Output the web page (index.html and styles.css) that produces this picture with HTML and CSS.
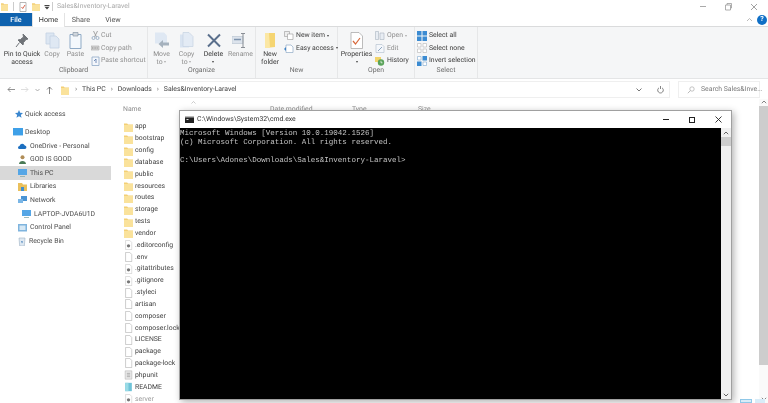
FILE: index.html
```html
<!DOCTYPE html>
<html lang="en">
<head>
<meta charset="utf-8">
<title>Sales&amp;Inventory-Laravel</title>
<link rel="stylesheet" href="styles.css">
</head>
<body>
<svg class="defs" width="0" height="0">
  <symbol id="folder" viewBox="0 0 10 10"><path d="M0 1.5h3.5l1 1H10V10H0z" fill="#f3cf75"/><path d="M0 3h10v7H0z" fill="#fae29b"/></symbol>
  <symbol id="doc" viewBox="0 0 10 12"><path d="M1.5.5h5l2.5 2.5v8.500H1.500z" fill="#fff" stroke="#a9a9a9" stroke-width=".7"/></symbol>
  <symbol id="cfg" viewBox="0 0 10 12"><path d="M1.500.5h5l2.500 2.500v8.500H1.500z" fill="#fff" stroke="#c4c4c4" stroke-width=".7"/><circle cx="5" cy="7" r="2" fill="#777"/></symbol>
</svg>

<header class="titlebar">
  <svg class="qa" width="7" height="9" viewBox="0 0 10 10" preserveAspectRatio="none"><use href="#folder"/></svg>
  <span class="qa-sep"></span>
  <svg class="qa" width="8" height="10" viewBox="0 0 8 10"><path d="M1 .5h6v9H1z" fill="#fff" stroke="#999" stroke-width=".7"/><path d="M2.500 5l1.200 1.500L6 3" fill="none" stroke="#d4553a" stroke-width=".9"/></svg>
  <svg class="qa qa-f" width="8" height="9" viewBox="0 0 10 10" preserveAspectRatio="none"><use href="#folder"/></svg>
  <svg class="qa qa-d" width="6" height="6" viewBox="0 0 6 6"><path d="M.5 1h5v1h-5zM.5 2.700h5L3 5.500z" fill="#444"/></svg>
  <span class="qa-sep qa-sep2"></span>
  <span class="title-text">Sales&amp;Inventory-Laravel</span>
  <div class="caption">
    <span class="cap-min"></span>
    <svg width="9" height="9" viewBox="0 0 9 9"><path d="M1.500 3h5v5h-5zM3 3V1.500h4.500V6H6.500" fill="none" stroke="#9a9a9a" stroke-width=".8"/></svg>
    <svg width="8" height="8" viewBox="0 0 8 8"><path d="M1 1l6 6M7 1L1 7" stroke="#8a8a8a" stroke-width=".8"/></svg>
  </div>
</header>

<nav class="tabs">
  <span class="tab tab-file">File</span>
  <span class="tab tab-home">Home</span>
  <span class="tab tab-share">Share</span>
  <span class="tab tab-view">View</span>
  <div class="tabs-right">
    <svg width="7" height="5" viewBox="0 0 7 5"><path d="M1 4l2.500-2.500L6 4" fill="none" stroke="#aaa" stroke-width=".8"/></svg>
    <span class="help">?</span>
  </div>
</nav>

<section class="ribbon">
  <div class="group g-clip">
    <div class="tools">
      <div class="tool t-pin">
        <svg width="14" height="15" viewBox="0 0 14 15"><path d="M8 1l5 5-2 .5-2.500 3-.5 2.500-5-5 2.500-.5 3-2.500zM4.500 9.500L1 14" fill="#6f7378" stroke="#6f7378" stroke-width="1"/></svg>
        <span>Pin to Quick<br>access</span>
      </div>
      <div class="tool t-copy muted">
        <svg width="15" height="17" viewBox="0 0 15 17"><path d="M1 1h8v11H1z" fill="#dce6f2" stroke="#c3d2e3" stroke-width=".8"/><path d="M5 4h6l3 3v9H5z" fill="#dfe8f3" stroke="#c3d2e3" stroke-width=".8"/></svg>
        <span>Copy</span>
      </div>
      <div class="tool t-paste muted">
        <svg width="13" height="18" viewBox="0 0 13 18"><path d="M1 3h11v14H1z" fill="#f4f8fc" stroke="#8faac6" stroke-width="1"/><path d="M4 1h5v3.500H4z" fill="#cfd6dd" stroke="#8a98a8" stroke-width=".7"/></svg>
        <span>Paste</span>
      </div>
      <div class="smalls">
        <div class="small muted"><svg width="9" height="9" viewBox="0 0 9 9"><path d="M2.500 0l3 6M6.500 0l-3 6" stroke="#9a9a9a" stroke-width=".9"/><circle cx="2.500" cy="7" r="1.500" fill="none" stroke="#9fb3c8"/><circle cx="6.500" cy="7" r="1.500" fill="none" stroke="#9fb3c8"/></svg>Cut</div>
        <div class="small muted"><svg width="9" height="9" viewBox="0 0 9 9"><path d="M0 2h8v4H0z" fill="#d5d5d5" stroke="#aaa" stroke-width=".6"/><path d="M1 4h6" stroke="#777" stroke-width=".8" stroke-dasharray="1 .6"/></svg>Copy path</div>
        <div class="small muted"><svg width="9" height="10" viewBox="0 0 9 10"><path d="M1 1h7v8.500H1z" fill="#f3f6fb" stroke="#8faac6" stroke-width=".8"/><path d="M3 5l2-2v4" fill="none" stroke="#5577aa" stroke-width=".8"/></svg>Paste shortcut</div>
      </div>
    </div>
    <div class="group-label">Clipboard</div>
  </div>

  <div class="group g-org">
    <div class="tools">
      <div class="tool t-move muted">
        <svg width="16" height="18" viewBox="0 0 16 18"><path d="M1 1h9l3 3v8H1z" fill="#dfe8f3"/><path d="M15 11H9V8.500L4.500 12.500 9 16.500V14h6z" fill="#a5b1bd"/></svg>
        <span>Move<br>to <i class="caret"></i></span>
      </div>
      <div class="tool t-cto muted">
        <svg width="15" height="18" viewBox="0 0 15 18"><path d="M1 3h9v13H1z" fill="#d9e4f1"/><path d="M4 1h6l4 4v10H4z" fill="#e3ebf5" stroke="#c6d3e2" stroke-width=".7"/></svg>
        <span>Copy<br>to <i class="caret"></i></span>
      </div>
      <div class="tool t-del">
        <svg width="16" height="16" viewBox="0 0 16 16"><path d="M2 2l12 12M14 2L2 14" stroke="#5a6f8c" stroke-width="2"/></svg>
        <span class="strong">Delete<br><i class="caret dark"></i></span>
      </div>
      <div class="tool t-ren muted">
        <svg width="17" height="16" viewBox="0 0 17 16"><path d="M0 4h11v7H0z" fill="#dce3ec" stroke="#bcc7d3" stroke-width=".7"/><path d="M2 7h7" stroke="#7d93ad" stroke-width="1.500"/><path d="M11 1v14M9 1h4M9 15h4" stroke="#8a8f96" stroke-width="1"/></svg>
        <span>Rename</span>
      </div>
    </div>
    <div class="group-label">Organize</div>
  </div>

  <div class="group g-new">
    <div class="tools">
      <div class="tool t-nf">
        <svg width="12" height="17" viewBox="0 0 12 17"><path d="M1 1h10v14l-10 1z" fill="#f5d572"/><path d="M1 1h4l1 15H1z" fill="#fbe7a4"/></svg>
        <span>New<br>folder</span>
      </div>
      <div class="smalls">
        <div class="small"><svg width="10" height="9" viewBox="0 0 10 9"><path d="M.5.5h5v5h-5z" fill="#eee" stroke="#999" stroke-width=".6"/><path d="M3.500 3h5.500v5.500H3.500z" fill="#fff" stroke="#999" stroke-width=".6"/></svg>New item <i class="caret dark"></i></div>
        <div class="small"><svg width="10" height="9" viewBox="0 0 10 9"><path d="M2 1h5l2 2v5.500H2z" fill="#fff" stroke="#8faac6" stroke-width=".7"/><path d="M0 5l2-2v4z" fill="#3f82c4"/></svg>Easy access <i class="caret dark"></i></div>
      </div>
    </div>
    <div class="group-label">New</div>
  </div>

  <div class="group g-open">
    <div class="tools">
      <div class="tool t-prop">
        <svg width="13" height="17" viewBox="0 0 13 17"><path d="M1 .5h8l3.500 3.500v12.500H1z" fill="#fff" stroke="#a0a0a0" stroke-width=".7"/><path d="M3 9l2.500 3L10 6" fill="none" stroke="#d8693c" stroke-width="1.200"/></svg>
        <span>Properties<br><i class="caret dark"></i></span>
      </div>
      <div class="smalls">
        <div class="small muted"><svg width="10" height="9" viewBox="0 0 10 9"><path d="M.5.500h3v8h-3zM5 2h4v6.500H5z" fill="#e8edf3" stroke="#a9b4c0" stroke-width=".6"/></svg>Open <i class="caret"></i></div>
        <div class="small muted"><svg width="10" height="9" viewBox="0 0 10 9"><path d="M1 .5h6l2 2v6H1z" fill="#f4f7fb" stroke="#aebccb" stroke-width=".6"/><path d="M3 7l4-4" stroke="#8ea6c0"/></svg>Edit</div>
        <div class="small"><svg width="10" height="10" viewBox="0 0 10 10"><path d="M0 1h6v5H0z" fill="#f2d46b"/><circle cx="6" cy="6.500" r="3.200" fill="#5aa35a"/><path d="M6 4.800v2h1.500" stroke="#fff" stroke-width=".7" fill="none"/></svg>History</div>
      </div>
    </div>
    <div class="group-label">Open</div>
  </div>

  <div class="group g-sel">
    <div class="tools">
      <div class="smalls">
        <div class="small"><svg width="10" height="10" viewBox="0 0 10 10"><path d="M0 0h4.500v4.500H0zM5.500 0H10v4.500H5.500zM0 5.500h4.500V10H0zM5.500 5.500H10V10H5.500z" fill="#3b8bd2"/></svg>Select all</div>
        <div class="small"><svg width="10" height="10" viewBox="0 0 10 10"><path d="M.5.500h3.500v3.500H.5zM6 .5h3.500v3.500H6zM.5 6h3.500v3.500H.5zM6 6h3.500v3.500H6z" fill="#fff" stroke="#b5b5b5" stroke-width=".6"/></svg>Select none</div>
        <div class="small"><svg width="10" height="10" viewBox="0 0 10 10"><path d="M5.500 0H10v4.500H5.500zM0 5.500h4.500V10H0z" fill="#3b8bd2"/><path d="M.5.500h3.500v3.500H.5zM6 6h3.500v3.500H6z" fill="#fff" stroke="#7fa7cf" stroke-width=".6"/></svg>Invert selection</div>
      </div>
    </div>
    <div class="group-label">Select</div>
  </div>
</section>

<div class="addressbar">
  <div class="navs">
    <svg width="8" height="7" viewBox="0 0 8 7"><path d="M8 3.500H1M3.500 1L1 3.500 3.500 6" fill="none" stroke="#777" stroke-width=".8"/></svg>
    <svg width="8" height="7" viewBox="0 0 8 7"><path d="M0 3.500h7M4.500 1L7 3.500 4.500 6" fill="none" stroke="#d5d5d5" stroke-width=".8"/></svg>
    <svg width="5" height="4" viewBox="0 0 5 4"><path d="M.5 1l2 2 2-2" fill="none" stroke="#999" stroke-width=".8"/></svg>
    <svg width="7" height="8" viewBox="0 0 7 8"><path d="M3.500 8V1M1 3.500L3.500 1 6 3.500" fill="none" stroke="#666" stroke-width=".8"/></svg>
  </div>
  <div class="path">
    <svg class="path-ico" width="8" height="10" viewBox="0 0 10 10" preserveAspectRatio="none"><use href="#folder"/></svg>
    <i class="sep sep-a">›</i><span>This PC</span><i class="sep">›</i><span>Downloads</span><i class="sep">›</i><span>Sales&amp;Inventory-Laravel</span>
    <svg class="path-drop" width="6" height="4" viewBox="0 0 6 4"><path d="M.5.5L3 3 5.500.5" fill="none" stroke="#666" stroke-width=".9"/></svg>
    <svg class="path-ref" width="7" height="8" viewBox="0 0 7 8"><path d="M2 1.800a2.800 2.800 0 1 0 3 0M3.500 0v3" fill="none" stroke="#666" stroke-width=".8"/></svg>
  </div>
  <div class="search">
    <svg width="8" height="8" viewBox="0 0 8 8"><circle cx="5" cy="3" r="2.200" fill="none" stroke="#aaa" stroke-width=".7"/><path d="M3.500 4.500L.8 7.200" stroke="#aaa" stroke-width=".8"/></svg>
    <span>Search Sales&amp;Inve...</span>
  </div>
</div>

<main class="explorer">
  <aside class="sidebar">
    <div class="row lvl-q"><svg width="8" height="8" viewBox="0 0 10 10"><path d="M5 0l1.500 3.500 3.500.3-2.700 2.300.9 3.700L5 7.800 1.800 9.800l.9-3.700L0 3.800l3.500-.3z" fill="#3b87cf"/></svg><span>Quick access</span></div>
    <div class="row lvl-d row-gap"><svg width="10" height="8" viewBox="0 0 9 7" preserveAspectRatio="none"><path d="M0 0h9v6.500H0z" fill="#3ea0e8"/></svg><span>Desktop</span></div>
    <div class="row lvl-1"><svg width="9" height="6" viewBox="0 0 9 6"><path d="M1.500 6a1.500 1.500 0 0 1 0-3A2.800 2.800 0 0 1 6.800 2.500 1.800 1.800 0 0 1 7.200 6z" fill="#1c6fc0"/></svg><span>OneDrive - Personal</span></div>
    <div class="row lvl-1"><svg width="9" height="9" viewBox="0 0 9 9"><circle cx="4.500" cy="2.200" r="2" fill="#b08d57"/><path d="M1 9c0-4 7-4 7 0z" fill="#4a7a55"/></svg><span>GOD IS GOOD</span></div>
    <div class="row lvl-1 selected"><svg width="9" height="8" viewBox="0 0 9 8"><path d="M0 0h9v6H0z" fill="#55a6e6"/><path d="M2 7.500h5" stroke="#8aa" stroke-width=".8"/></svg><span>This PC</span></div>
    <div class="row lvl-1"><svg width="9" height="8" viewBox="0 0 9 8"><path d="M0 0h4l1 1.500h4V8H0z" fill="#eac05c"/><path d="M3 4h3v4H3z" fill="#3f8fd0"/></svg><span>Libraries</span></div>
    <div class="row lvl-1"><svg width="9" height="8" viewBox="0 0 9 8"><path d="M3 0h6v5H3z" fill="#4a94d4"/><path d="M0 3h5v4H0z" fill="#7ab6e6"/></svg><span>Network</span></div>
    <div class="row lvl-2"><svg width="9" height="8" viewBox="0 0 9 8"><path d="M0 0h9v6H0z" fill="#55a6e6"/><path d="M2 7.500h5" stroke="#8aa" stroke-width=".8"/></svg><span>LAPTOP-JVDA6U1D</span></div>
    <div class="row lvl-1"><svg width="9" height="8" viewBox="0 0 9 8"><path d="M0 0h9v7.500H0z" fill="#7fb4de"/><path d="M1.500 1.500h6v4.500h-6z" fill="#d6e8f5"/></svg><span>Control Panel</span></div>
    <div class="row lvl-1"><svg width="8" height="9" viewBox="0 0 8 9"><path d="M1 1h6l-.7 8H1.700z" fill="#dfe9f2" stroke="#9db2c5" stroke-width=".6"/><path d="M3 4l2 .5-1 2z" fill="#4a84bd"/></svg><span>Recycle Bin</span></div>
  </aside>

  <section class="files">
    <div class="sort-caret"><svg width="5" height="3" viewBox="0 0 5 3"><path d="M.5 2.500L2.500.5l2 2" fill="none" stroke="#aaa" stroke-width=".6"/></svg></div>
    <div class="cols"><span class="c-name">Name</span><span class="c-date">Date modified</span><span class="c-type">Type</span><span class="c-size">Size</span></div>
    <ul class="list">
      <li><svg width="9" height="10" preserveAspectRatio="none" viewBox="0 0 10 10"><use href="#folder"/></svg>app</li>
      <li><svg width="9" height="10" preserveAspectRatio="none" viewBox="0 0 10 10"><use href="#folder"/></svg>bootstrap</li>
      <li><svg width="9" height="10" preserveAspectRatio="none" viewBox="0 0 10 10"><use href="#folder"/></svg>config</li>
      <li><svg width="9" height="10" preserveAspectRatio="none" viewBox="0 0 10 10"><use href="#folder"/></svg>database</li>
      <li><svg width="9" height="10" preserveAspectRatio="none" viewBox="0 0 10 10"><use href="#folder"/></svg>public</li>
      <li><svg width="9" height="10" preserveAspectRatio="none" viewBox="0 0 10 10"><use href="#folder"/></svg>resources</li>
      <li><svg width="9" height="10" preserveAspectRatio="none" viewBox="0 0 10 10"><use href="#folder"/></svg>routes</li>
      <li><svg width="9" height="10" preserveAspectRatio="none" viewBox="0 0 10 10"><use href="#folder"/></svg>storage</li>
      <li><svg width="9" height="10" preserveAspectRatio="none" viewBox="0 0 10 10"><use href="#folder"/></svg>tests</li>
      <li><svg width="9" height="10" preserveAspectRatio="none" viewBox="0 0 10 10"><use href="#folder"/></svg>vendor</li>
      <li><svg width="9" height="10" viewBox="0 0 10 12"><use href="#cfg"/></svg>.editorconfig</li>
      <li><svg width="9" height="10" viewBox="0 0 10 12"><use href="#doc"/></svg>.env</li>
      <li><svg width="9" height="10" viewBox="0 0 10 12"><use href="#cfg"/></svg>.gitattributes</li>
      <li><svg width="9" height="10" viewBox="0 0 10 12"><use href="#cfg"/></svg>.gitignore</li>
      <li><svg width="9" height="10" viewBox="0 0 10 12"><use href="#doc"/></svg>.styleci</li>
      <li><svg width="9" height="10" viewBox="0 0 10 12"><use href="#doc"/></svg>artisan</li>
      <li><svg width="9" height="10" viewBox="0 0 10 12"><use href="#doc"/></svg>composer</li>
      <li><svg width="9" height="10" viewBox="0 0 10 12"><use href="#doc"/></svg>composer.lock</li>
      <li><svg width="9" height="10" viewBox="0 0 10 12"><use href="#doc"/></svg>LICENSE</li>
      <li><svg width="9" height="10" viewBox="0 0 10 12"><use href="#doc"/></svg>package</li>
      <li><svg width="9" height="10" viewBox="0 0 10 12"><use href="#doc"/></svg>package-lock</li>
      <li><svg width="9" height="10" viewBox="0 0 10 12"><path d="M1 1h8v10H1z" fill="#e9e9e9" stroke="#aaa" stroke-width=".6"/><path d="M3 4h4M3 6h4M3 8h4" stroke="#888" stroke-width=".7"/></svg>phpunit</li>
      <li><svg width="9" height="10" viewBox="0 0 10 12"><path d="M1 1h8v10H1z" fill="#6fc3d8"/><path d="M1 1h4v10H1z" fill="#9adbe6"/></svg>README</li>
      <li class="cut"><svg width="9" height="10" viewBox="0 0 10 12"><use href="#cfg"/></svg>server</li>
    </ul>
  </section>

  <div class="vscroll">
    <svg width="6" height="4" viewBox="0 0 6 4"><path d="M.8 3.200L3 1l2.200 2.200" fill="none" stroke="#666" stroke-width=".8"/></svg>
    <div class="vthumb"></div>
    <svg class="vdown" width="6" height="4" viewBox="0 0 6 4"><path d="M.8.800L3 3l2.200-2.200" fill="none" stroke="#666" stroke-width=".8"/></svg>
  </div>
</main>

<div class="viewbtns"><span class="vb on"></span><span class="vb"></span></div>

<div class="cmd">
  <div class="cmd-title">
    <svg width="9" height="7" viewBox="0 0 9 7"><path d="M0 0h9v7H0z" fill="#222"/><path d="M0 0h9v1.500H0z" fill="#bbb"/><path d="M1.500 3h2v1h-2z" fill="#ddd"/></svg>
    <span>C:\Windows\System32\cmd.exe</span>
    <div class="cmd-caps">
      <span class="cmd-min"></span>
      <span class="cmd-max"></span>
      <svg width="7" height="7" viewBox="0 0 7 7"><path d="M.5.500l6 6M6.500.500l-6 6" stroke="#222" stroke-width=".9"/></svg>
    </div>
  </div>
  <div class="cmd-body">
    <pre class="console">Microsoft Windows [Version 10.0.19042.1526]
(c) Microsoft Corporation. All rights reserved.

C:\Users\Adones\Downloads\Sales&amp;Inventory-Laravel&gt;</pre>
    <div class="cmd-scroll">
      <svg width="6" height="4" viewBox="0 0 6 4"><path d="M.8 3.200L3 1l2.200 2.200" fill="none" stroke="#555" stroke-width=".9"/></svg>
      <div class="cmd-thumb"></div>
      <svg class="vdown" width="6" height="4" viewBox="0 0 6 4"><path d="M.8.800L3 3l2.200-2.200" fill="none" stroke="#555" stroke-width=".9"/></svg>
    </div>
  </div>
</div>
</body>
</html>
```

FILE: styles.css
```css
* { box-sizing: border-box; }
html, body { margin: 0; padding: 0; }
body {
  position: relative;
  width: 768px;
  height: 403px;
  overflow: hidden;
  background: #fff;
  color: #3a3a3a;
  font-family: Roboto, "Open Sans", sans-serif;
  font-size: 6.85px;
  line-height: 1;
  text-rendering: geometricPrecision;
  filter: blur(0.35px);
}
svg { flex: none; display: block; }
.defs { position: absolute; }

.titlebar { display: flex; align-items: center; height: 13px; padding-left: 1px; }
.qa-sep { width: 1px; height: 9px; background: #ccc; margin: 0 5px; }
.qa-f { margin-left: 5px; }
.qa-d { margin-left: 4px; }
.qa-sep2 { margin: 0 4px 0 2px; }
.title-text { color: #a8a8a8; }
.caption { margin-left: auto; display: flex; align-items: center; gap: 17.5px; padding-right: 10px; }
.cap-min { width: 6px; height: 1px; background: #aaa; }

.tabs { display: flex; align-items: stretch; height: 14px; border-bottom: 1px solid #dadbdc; position: relative; }
.tab { display: flex; align-items: center; justify-content: center; font-size: 7.2px; }
.tab-file { width: 32px; background: #0f62ae; color: #fff; font-weight: 500; }
.tab-home { width: 33px; background: #fff; height: 14px; border-left: 1px solid #e3e3e3; border-right: 1px solid #e3e3e3; color: #333; }
.tab-share { width: 32px; color: #555; }
.tab-view { width: 32px; color: #555; }
.tabs-right { margin-left: auto; display: flex; align-items: center; gap: 4.5px; padding-right: 1px; }
.help { width: 10px; height: 10px; border-radius: 50%; background: #0f6fc6; color: #fff; font-size: 7px; font-weight: 700; display: flex; align-items: center; justify-content: center; }

.ribbon { display: flex; height: 52px; background: #f5f6f7; border-bottom: 1px solid #e4e5e6; }
.group { display: flex; flex-direction: column; border-right: 1px solid #e6e7e8; }
.tools { display: flex; flex: 1; }
.group-label { height: 10px; text-align: center; color: #6b6b6b; margin-bottom: 1px; }
.g-clip { width: 148px; }
.g-org { width: 108px; }
.g-new { width: 82px; }
.g-open { width: 77px; }
.g-sel { width: 63px; }
.tool { flex: none; display: flex; flex-direction: column; align-items: center; padding-top: 4px; text-align: center; line-height: 7.5px; }
.tool > svg { height: 19px; margin-bottom: 1px; }
.muted { color: #8e8e8e; }
.strong { color: #333; }
.t-pin { width: 44px; }
.t-copy { width: 16px; }
.t-paste { width: 31px; }
.smalls { display: flex; flex-direction: column; padding-top: 4px; gap: 3.5px; }
.small { display: flex; align-items: center; gap: 2px; height: 9px; white-space: nowrap; }
.g-clip .small { gap: 1px; }
.g-org .tool:first-child { margin-left: 1px; }
.t-move { width: 25px; }
.t-cto { width: 25px; }
.t-del { width: 29px; }
.t-ren { width: 25px; }
.t-nf { width: 28px; }
.t-prop { width: 37px; }
.g-sel .smalls { padding-left: 2px; }
.caret { display: inline-block; width: 0; height: 0; border-left: 1.5px solid transparent; border-right: 1.5px solid transparent; border-top: 2px solid #aaa; vertical-align: middle; }
.caret.dark { border-top-color: #444; }

.addressbar { display: flex; align-items: center; height: 19px; margin-top: 1px; }
.navs { display: flex; align-items: center; width: 61px; padding-left: 7px; gap: 6px; }
.path { display: flex; align-items: center; width: 609px; height: 17px; border-top: 1px solid #efefef; border-bottom: 1px solid #efefef; border-right: 1px solid #efefef; color: #3d3d3d; }
.sep { font-style: normal; color: #777; margin: 0 5px; font-size: 7px; }
.sep-a { margin-left: 6px; }
.path-drop { margin-left: auto; margin-right: 9px; }
.path-ref { margin-right: 5px; margin-left: 6px; }
.search { display: flex; align-items: center; gap: 6px; width: 82px; height: 17px; margin-left: 8px; padding-left: 8px; color: #7a7a7a; border: 1px solid #efefef; white-space: nowrap; }

.explorer { display: flex; height: 304px; }
.sidebar { width: 122px; padding-top: 8.5px; }
.row { display: flex; align-items: center; height: 13.6px; color: #4a4a4a; width: 111px; }
.row svg { margin-right: 3px; }
.lvl-q { padding-left: 15px; }
.lvl-q svg { margin-right: 2px; }
.lvl-d { padding-left: 13px; }
.lvl-d svg { margin-right: 2px; }
.row-gap { margin-top: 4.5px; }
.lvl-1 { padding-left: 18px; }
.lvl-2 { padding-left: 22px; }
.selected { background: #d9d9d9; }

.files { width: 637px; padding-top: 2px; }
.sort-caret { height: 3px; padding-left: 69px; }
.cols { display: flex; height: 9px; margin-top: 1px; color: #8a8a8a; align-items: center; }
.c-name { width: 148px; padding-left: 1px; }
.c-date { width: 82px; }
.c-type { width: 66px; }
.list { list-style: none; margin: 7px 0 0; padding: 0; }
.list li { display: flex; align-items: center; gap: 2px; height: 11.83px; padding-left: 2px; color: #424242; white-space: nowrap; }
.list .cut { color: #9a9a9a; }

.vscroll { flex: 1; display: flex; flex-direction: column; align-items: center; padding-top: 1px; background: #fafafa; }
.vthumb { width: 9px; height: 259px; background: #cdcdcd; margin-top: 2px; }
.vdown { margin-top: auto; margin-bottom: 2px; }

.viewbtns { position: absolute; right: 0; bottom: 0; display: flex; gap: 3px; padding-right: 3px; }
.vb { width: 10px; height: 4px; background: #d8ecf8; }
.vb.on { width: 12px; border: 1px solid #8fc8e8; }

.cmd {
  position: absolute;
  left: 179px;
  top: 110px;
  width: 553px;
  height: 290px;
  background: #f0f0f0;
  border: 1px solid #a0a0a0;
  box-shadow: 2px 2px 7px rgba(0,0,0,.3);
  display: flex;
  flex-direction: column;
  will-change: transform;
}
.cmd-title { display: flex; align-items: center; height: 17px; background: #fff; padding-left: 5px; color: #333; flex: none; }
.cmd-title > svg { margin-right: 3px; }
.cmd-caps { margin-left: auto; display: flex; align-items: center; gap: 20px; padding-right: 9px; }
.cmd-min { width: 6px; height: 1px; background: #222; }
.cmd-max { width: 6px; height: 6px; border: 1px solid #222; }
.cmd-body { flex: 1; display: flex; min-height: 0; }
.console { flex: 1; margin: 0; background: #000; color: #c4c4c4; font-family: "Liberation Mono", "DejaVu Sans Mono", monospace; font-size: 7.53px; line-height: 9px; padding: 2px 0 0; }
.cmd-scroll { width: 10px; display: flex; flex-direction: column; align-items: center; padding-top: 3px; background: #f0f0f0; }
.cmd-thumb { width: 10px; height: 9px; background: #cdcdcd; margin-top: 2px; }
```
